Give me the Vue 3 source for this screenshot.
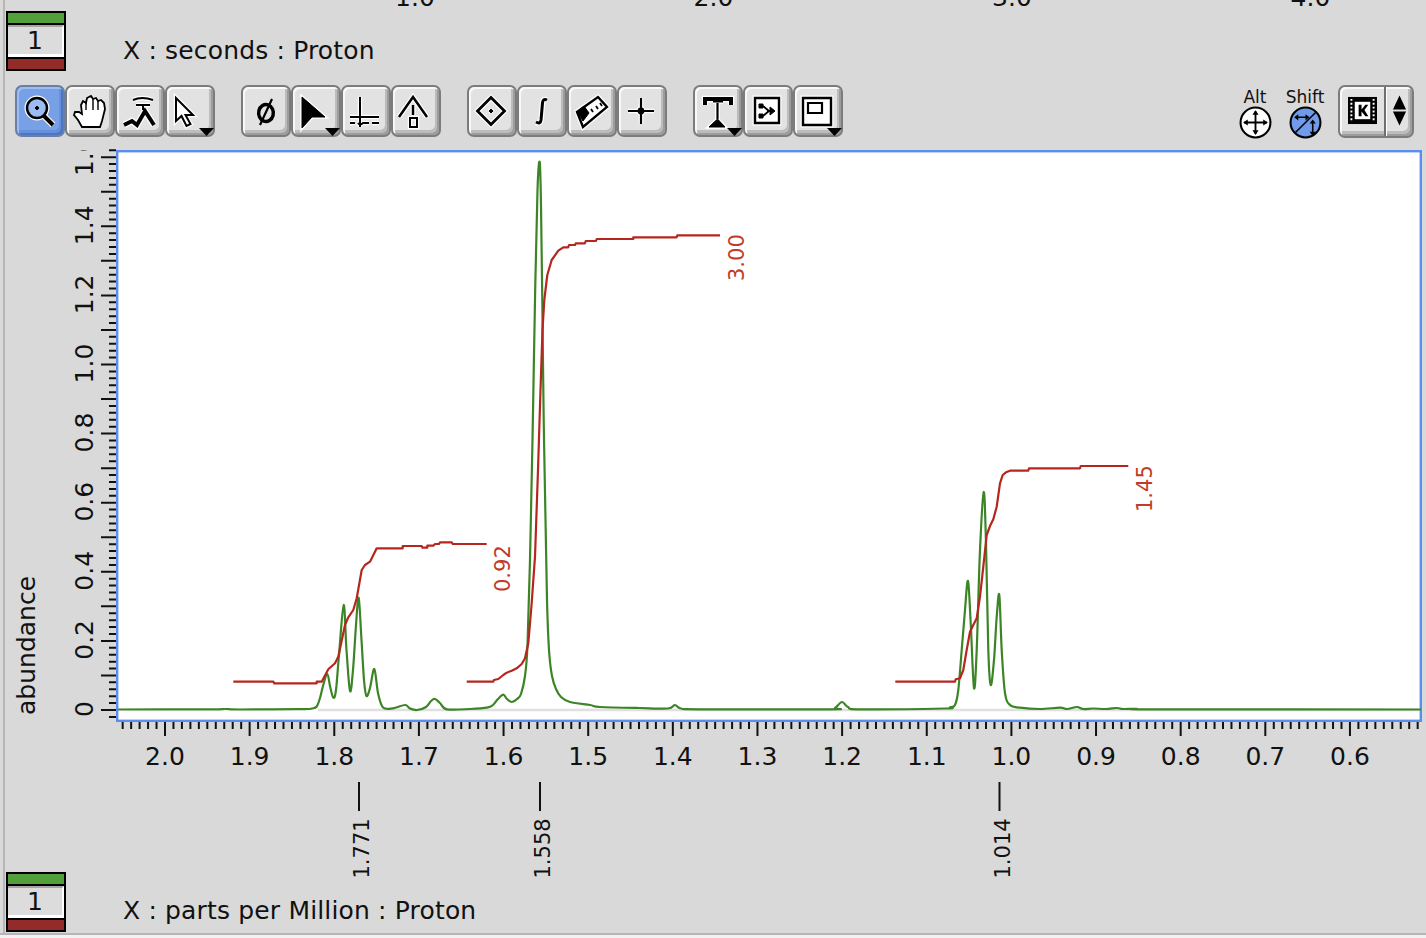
<script setup>
// spectrum geometry, in page pixels
const ppmX = (ppm) => 165 + (2 - ppm) * 846.4
const absY = (v) => 710 - 345.5 * v

const xTicks = []
for (let n = -5; 165 + n * 8.464 < 1421; n++) {
  const x = 165 + n * 8.464
  xTicks.push(`M${x} 722V${n % 10 === 0 ? 736 : 729}`)
}
const yTicks = []
for (let n = -1; n <= 81; n++) {
  const y = absY(n * 0.02)
  yTicks.push(`M116 ${y}H${n % 5 === 0 ? 101 : 109}`)
}
const xLabels = ['2.0', '1.9', '1.8', '1.7', '1.6', '1.5', '1.4', '1.3', '1.2', '1.1', '1.0', '0.9', '0.8', '0.7', '0.6']
const yLabels = ['0', '0.2', '0.4', '0.6', '0.8', '1.0', '1.2', '1.4', '1.6']
const peaks = [
  { label: '1.771', x: 359 },
  { label: '1.558', x: 540 },
  { label: '1.014', x: 999.5 }
]
const integrals = [
  { label: '0.92', x: 510, y: 592 },
  { label: '3.00', x: 744, y: 281 },
  { label: '1.45', x: 1152, y: 512 }
]

const spectrum = [
  [118, 709.5], [210, 709.3], [225, 709], [240, 709.5], [300, 709.2], [312, 708.5], [316.7, 706.5], [320, 698], [323, 686], [327.3, 674], [330, 686], [333.3, 697.7],
  [336, 690], [339, 655], [343.7, 605], [346.5, 650], [350, 691], [353, 670], [356, 625], [358.7, 598], [361.5, 640], [364, 680], [366.5, 696], [370, 688], [374.3, 669],
  [378, 693], [383, 707.5], [393, 708.3], [405, 705], [410, 708.5], [417, 710], [426, 707], [431, 701], [435, 699], [440, 703], [447, 709.3], [470, 709], [487, 707.7],
  [493, 705], [498, 699], [503.3, 694.7], [507, 699], [511.7, 702], [517, 699], [521, 694], [525, 676], [527.5, 645], [530, 560], [532.5, 440], [535, 300], [537.5, 190],
  [539.7, 162], [541, 205], [542.3, 300], [543.7, 420], [545.7, 530], [547, 600], [549, 650], [552, 676], [556, 689], [561, 697], [570, 702], [590, 705], [600, 707],
  [640, 708], [668, 708.5], [675, 705], [681, 708.5], [700, 709.3], [830, 709.3], [835, 708], [842, 702], [848, 707], [860, 709.3], [945, 708.5], [950, 707.3], [955, 705],
  [958.3, 690], [961.7, 650], [965, 610], [968, 581], [970.7, 623], [974, 688], [976.7, 650], [980, 550], [983.7, 492], [986, 543], [988.3, 650], [990.7, 685], [994, 660],
  [996.7, 617], [999.3, 595], [1001.7, 650], [1005, 693], [1010, 705], [1020, 707.7], [1040, 709], [1060, 707.7], [1067, 709], [1077, 707], [1083, 709], [1093, 708.5],
  [1106, 709], [1117, 708], [1123, 709], [1136, 708.8], [1157, 709.3], [1421, 709.5]
]

// catmull-rom so the valleys stay round
function smoothPath(pts) {
  let d = `M${pts[0][0]} ${pts[0][1]}`
  for (let i = 0; i < pts.length - 1; i++) {
    const p0 = pts[i - 1] || pts[i]
    const p1 = pts[i]
    const p2 = pts[i + 1]
    const p3 = pts[i + 2] || p2
    const c1x = p1[0] + (p2[0] - p0[0]) / 6
    const c1y = p1[1] + (p2[1] - p0[1]) / 6
    const c2x = p2[0] - (p3[0] - p1[0]) / 6
    const c2y = p2[1] - (p3[1] - p1[1]) / 6
    d += `C${c1x.toFixed(1)} ${c1y.toFixed(1)} ${c2x.toFixed(1)} ${c2y.toFixed(1)} ${p2[0]} ${p2[1]}`
  }
  return d
}
const spectrumPath = smoothPath(spectrum)

const integralPaths = [
  'M233.3 681.7H273.3L274.3 683.3H316.7V681.7H321.7L328.3 669.3L335 663.3L338.3 656.7L345 625L348.3 617.3L353.3 610L356.7 598.3L361.7 570L365 565L370 561.7L376.7 548.3H402.7V546H421.7L422.5 547.7H427.3V545.7H433.3L435 544H439L440 542.3H451.7L452.7 544H486.7',
  'M466.7 681.7H493.3L494 680L498.3 679L503.3 675L506.7 672.7L511.7 670.7L516.7 668.3L521.7 664L525 658.3L528.3 643.3L531.7 603L535 556.7L538 470L540.5 390L542.5 330L544.3 300L547.3 275L551.7 260L558.3 250.7L563.3 247.3H568.3L569 245H575L575.7 243.3H585L585.7 241H596L596.7 239H633.3V237.3H676.7L677.3 235.3H720',
  'M895.3 681.7H955L955.7 679.3L960 678.3L963.3 670L966.7 650L970 631.7L973.3 625L976.7 618.3L980 596.7L983.3 566.7L986.7 535L990 526L993.3 519.3L996.7 506.7L1000 483.3L1002.7 475L1006 472.3L1010 470.7H1028.3L1029 468.3H1080L1080.7 466H1128.3'
]

// toolbar icons, drawn on the 50x52 button box: white halo first, ink on top
const menuMark = 'M34 43H49L41.5 51Z'
const toolGroups = [
  [
    { active: true, items: [
      { d: 'M29 31L38 40', w: 4 },
      { d: 'M32 23A10 10 0 1 1 12 23A10 10 0 1 1 32 23Z', w: 2.5, fill: '#9bbcf2' },
      { d: 'M20 23H24M22 21V25', w: 2 }
    ] },
    { plain: true, items: [
      { d: 'M17 42L13 35L9 30L10 27L14 27L17 29L16 20L18 16L21 18L22 13L26 11L28 14L31 13L33 16L36 15L39 18L40 24L37 36L35 42Z', w: 1.8, fill: '#fff' },
      { d: 'M21 18V25M28 14V25M33 16V25', w: 1.4 }
    ] },
    { items: [
      { d: 'M18 15Q27 11 38 15M21 20H35M28 20V25', w: 2 },
      { d: 'M9 40L17 36L22 40L30 26L39 40', w: 4 }
    ] },
    { menu: true, items: [
      { d: 'M11 13V36L16.5 31L21.5 41L25.5 39L20.5 30H28Z', w: 2, fill: '#fff' }
    ] }
  ],
  [
    { plain: true, items: [
      { d: 'M31.5 24A6.5 7.5 0 1 1 18.5 32A6.5 7.5 0 1 1 31.5 24Z', w: 3.4 },
      { d: 'M31 14L19 40', w: 2.2 }
    ] },
    { menu: true, items: [
      { d: 'M11 12L34 32H21L11 43Z', w: 1, fill: '#000' }
    ] },
    { items: [
      { d: 'M19 12V42M9 32H38', w: 2 },
      { d: 'M9 38H14M17 38Q19 41 22 38H28M31 38H38', w: 2 }
    ] },
    { items: [
      { d: 'M8 32L22 12L36 32', w: 2.5 },
      { d: 'M22 20V30', w: 2.5 },
      { d: 'M19 33H26V42H19Z', w: 2 }
    ] }
  ],
  [
    { items: [
      { d: 'M24 12.5L37.5 26L24 39.5L10.5 26Z', w: 2.8 },
      { d: 'M22 26H26M24 24V28', w: 2 }
    ] },
    { items: [
      { d: 'M30 15Q26 13 25.5 18L24 35Q23.5 39.5 19 37', w: 3 }
    ] },
    { items: [
      { d: 'M31 12L40 22L16 42L10 27Z', w: 2.4, fill: '#fff' },
      { d: 'M10 27L17 21L22 28L16 36Z', w: 1, fill: '#000' },
      { d: 'M24 24L26 27M29 21L31 24M33 18L35 21', w: 1.8 }
    ] },
    { items: [
      { d: 'M24 13V39M11 26H37', w: 2.2 },
      { d: 'M26.5 26A2.5 2.500 0 1 1 21.5 26A2.5 2.5 0 1 1 26.5 26Z', w: 1.8 }
    ] }
  ],
  [
    { menu: true, items: [
      { d: 'M12 20V14H38V20M20 15.5H30', w: 4 },
      { d: 'M24.5 18V34', w: 2.2 },
      { d: 'M16 42L24.5 34L32 42Z', w: 1, fill: '#000' }
    ] },
    { items: [
      { d: 'M12 13H36V38H12Z', w: 2.4, fill: '#fff' },
      { d: 'M16 19H20V23H16ZM16 29H20V33H16Z', w: 1, fill: '#000' },
      { d: 'M20 21L26 26L20 31M24 26H29', w: 1.8 },
      { d: 'M27 22L32 26L27 30Z', w: 1, fill: '#000' }
    ] },
    { menu: true, items: [
      { d: 'M10 13H38V40H10Z', w: 2.4, fill: '#fff' },
      { d: 'M15 18H29V28H15Z', w: 2.2, fill: '#fff' }
    ] }
  ]
]
</script>

<template>
  <div class="app">
    <div class="prev-axis">
      <span v-for="t in ['1.0', '2.0', '3.0', '4.0']" :key="t">{{ t }}</span>
    </div>

    <div class="title-row">
      <div class="badge">
        <div class="band green"></div>
        <div class="num">1</div>
        <div class="band red"></div>
      </div>
      <div class="title">X : seconds : Proton</div>
    </div>

    <div class="toolbar">
      <div v-for="(group, g) in toolGroups" :key="g" class="tool-group">
        <div v-for="(tool, i) in group" :key="i" :class="['tool', { active: tool.active }]">
          <svg viewBox="0 0 50 52" class="tool-icon">
            <template v-if="!tool.plain">
              <path
                v-for="(it, n) in tool.items"
                :key="'h' + n"
                :d="it.d"
                fill="none"
                stroke="#fff"
                :stroke-width="it.w + 2.5"
              />
            </template>
            <path
              v-for="(it, n) in tool.items"
              :key="n"
              :d="it.d"
              :fill="it.fill || 'none'"
              stroke="#000"
              :stroke-width="it.w"
            />
            <path v-if="tool.menu" :d="menuMark" fill="#000" />
          </svg>
        </div>
      </div>

      <div class="modifiers">
        <div class="mod">
          <span>Alt</span>
          <svg viewBox="0 0 32 32" class="mod-icon">
            <circle cx="16" cy="16" r="14.5" fill="#fff" stroke="#000" stroke-width="2" />
            <path d="M16 5V27M5 16H27" stroke="#000" stroke-width="1.8" />
            <path d="M16 4L13 8.5H19ZM16 28L13 23.5H19ZM4 16L8.5 13V19ZM28 16L23.5 13V19Z" fill="#000" />
          </svg>
        </div>
        <div class="mod">
          <span>Shift</span>
          <svg viewBox="0 0 32 32" class="mod-icon">
            <circle cx="16" cy="16" r="14.5" fill="#6f9bea" stroke="#000" stroke-width="2" />
            <path d="M6 26L26 6" stroke="#000" stroke-width="1.5" />
            <path d="M7 11H18M23 15V27" stroke="#000" stroke-width="1.5" />
            <path d="M5 11L9 8V14ZM20 11L16 8V14ZM23 13L20 17H26ZM23 29L20 25H26Z" fill="#000" />
          </svg>
        </div>
        <div class="segmented">
          <div class="seg seg-main">
            <svg viewBox="0 0 32 30" class="seg-icon">
              <rect x="1" y="1" width="30" height="28" fill="#000" />
              <path d="M4.5 3V27M27.5 3V27" stroke="#fff" stroke-width="2" stroke-dasharray="2 2" />
              <rect x="8" y="6" width="16" height="18" fill="#fff" />
              <path d="M12 9H15V14L19 9H22L18 14.5L22 21H19L15 16V21H12Z" fill="#000" />
            </svg>
          </div>
          <div class="seg seg-arrows">
            <svg viewBox="0 0 16 34" class="seg-arrow">
              <path d="M8 1L15 16H1ZM8 33L15 18H1Z" fill="#000" />
            </svg>
          </div>
        </div>
      </div>
    </div>

    <svg class="chart" viewBox="0 145 1426 728">
      <clipPath id="y-label-clip">
        <rect x="0" y="150" width="116" height="600" />
      </clipPath>

      <rect x="117.2" y="151.2" width="1303.6" height="569.6" fill="#fff" stroke="#5a8df0" stroke-width="2.4" />
      <path d="M318 710H1420" stroke="#e0e0e0" stroke-width="2.4" />

      <path :d="xTicks.join('')" stroke="#111" stroke-width="2" fill="none" />
      <path :d="yTicks.join('')" stroke="#111" stroke-width="2" fill="none" />

      <path :d="spectrumPath" class="spectrum" />
      <path v-for="(d, i) in integralPaths" :key="i" :d="d" class="integral" />

      <text
        v-for="label in integrals"
        :key="label.label"
        class="integral-label"
        :transform="`translate(${label.x} ${label.y}) rotate(-90)`"
      >{{ label.label }}</text>

      <text
        v-for="(label, i) in xLabels"
        :key="label"
        class="axis-label"
        text-anchor="middle"
        :x="ppmX(2 - i / 10)"
        y="765"
      >{{ label }}</text>
      <g clip-path="url(#y-label-clip)">
        <text
          v-for="(label, i) in yLabels"
          :key="label"
          class="axis-label"
          text-anchor="middle"
          :transform="`translate(93 ${absY(i / 5) - 1}) rotate(-90)`"
        >{{ label }}</text>
      </g>
      <text class="axis-label" transform="translate(35 715) rotate(-90)">abundance</text>

      <g v-for="p in peaks" :key="p.label">
        <path :d="`M${p.x} 782V811`" stroke="#111" stroke-width="2" />
        <text class="peak-label" :transform="`translate(${p.x + 10} 878.5) rotate(-90)`">{{ p.label }}</text>
      </g>
    </svg>

    <div class="title-row footer-row">
      <div class="badge">
        <div class="band green"></div>
        <div class="num">1</div>
        <div class="band red"></div>
      </div>
      <div class="title">X : parts per Million : Proton</div>
    </div>
  </div>
</template>

<style scoped>
.app {
  width: 1426px;
  height: 938px;
  overflow: hidden;
  box-sizing: border-box;
  padding-left: 6px;
  background:
    linear-gradient(to bottom, transparent 933px, #b6b6b6 933px, #b6b6b6 935px, #f2f2f2 935px),
    linear-gradient(to right, #d9d9d9 3px, #b6b6b6 3px, #b6b6b6 5px, #d9d9d9 5px);
  color: #111;
  font-family: "DejaVu Sans", sans-serif;
}

.prev-axis {
  height: 12px;
  display: flex;
  gap: 198.5px;
  padding-left: 359px;
  align-items: flex-end;
  overflow: hidden;
  font-size: 25px;
  line-height: 21px;
}

.prev-axis span {
  width: 100px;
  flex: none;
  text-align: center;
  transform: translateY(-4px);
}

.title-row {
  display: flex;
  align-items: flex-end;
  height: 59px;
}

.badge {
  width: 60px;
  height: 60px;
  box-sizing: border-box;
  border: 2px solid #000;
  display: flex;
  flex-direction: column;
  flex: none;
}

.band {
  flex: none;
}

.green {
  background: #53a03a;
  border-bottom: 2px solid #000;
  height: 10px;
}

.red {
  background: #932c28;
  border-top: 2px solid #000;
  height: 10px;
}

.num {
  flex: 1;
  background: #dcdcdc;
  border-top: 2px solid #a5a5a5;
  border-bottom: 3px solid #fff;
  border-right: 2px solid #fff;
  text-align: center;
  font-size: 25px;
  line-height: 27px;
}

.title {
  margin-left: 57px;
  font-size: 25px;
  line-height: 30px;
  margin-bottom: 5px;
  letter-spacing: 0.16px;
}

.toolbar {
  display: flex;
  margin-top: 14px;
  height: 52px;
  padding-left: 9px;
  padding-right: 12px;
}

.tool-group {
  display: flex;
  margin-right: 26px;
}

.tool {
  width: 50px;
  height: 52px;
  box-sizing: border-box;
  border: 2px solid #7c7c7c;
  border-radius: 7px;
  background: #e2e2e2;
  box-shadow: inset 2px 2px 0 #f8f8f8, inset -2px -2px 0 #9c9c9c, inset -4px -5px 0 #bcbcbc;
  position: relative;
}

.tool.active {
  background: #78a0e6;
  border-color: #6a7fa8;
  box-shadow: inset 2px 2px 0 #9dbcf2, inset -2px -2px 0 #4f76bd, inset -4px -5px 0 #6590dc;
}

.tool-icon {
  position: absolute;
  left: -2px;
  top: -2px;
  width: 50px;
  height: 52px;
  overflow: visible;
}

.modifiers {
  margin-left: auto;
  display: flex;
  align-items: flex-start;
}

.mod {
  width: 50px;
  display: flex;
  flex-direction: column;
  align-items: center;
  font-size: 17px;
  line-height: 20px;
  margin-top: 2px;
  transform: translateX(-1px);
}

.mod-icon {
  width: 33px;
  height: 33px;
  margin-top: -1px;
}

.segmented {
  margin-left: 7px;
  width: 76px;
  height: 53px;
  box-sizing: border-box;
  border: 2px solid #7c7c7c;
  border-radius: 7px;
  background: #e2e2e2;
  box-shadow: inset 2px 2px 0 #f8f8f8, inset -2px -2px 0 #9c9c9c, inset -4px -5px 0 #bcbcbc;
  display: flex;
}

.seg {
  display: flex;
  align-items: center;
  justify-content: center;
  padding-bottom: 3px;
  box-sizing: border-box;
}

.seg-main {
  width: 46px;
  border-right: 2px solid #6f6f6f;
  box-shadow: 1px 0 0 #fff;
}

.seg-arrows {
  flex: 1;
}

.seg-icon {
  width: 31px;
  height: 29px;
}

.seg-arrow {
  width: 15px;
  height: 33px;
}

.chart {
  display: block;
  width: 1426px;
  height: 728px;
  margin-left: -6px;
  margin-top: 8px;
  overflow: visible;
}

.spectrum {
  fill: none;
  stroke: #3c8526;
  stroke-width: 2.2;
  stroke-linejoin: round;
}

.integral {
  fill: none;
  stroke: #b5261e;
  stroke-width: 2.2;
  stroke-linejoin: round;
}

.integral-label {
  fill: #c23a28;
  font-size: 21px;
}

.axis-label {
  fill: #111;
  font-size: 25px;
}

.peak-label {
  fill: #111;
  font-size: 21px;
}

.footer-row {
  position: relative;
}

.footer-row .title {
  margin-bottom: 6px;
}
</style>
